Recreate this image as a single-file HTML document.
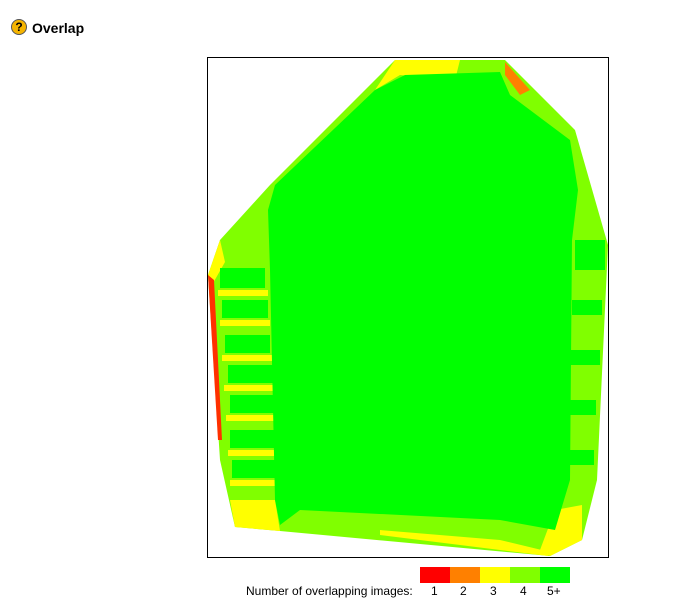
<!DOCTYPE html>
<html><head><style>
body{margin:0;background:#fff;width:689px;height:614px;position:relative;font-family:"Liberation Sans",sans-serif;}
.t{position:absolute;left:32px;top:20px;font-weight:bold;font-size:14px;color:#000;}
.ic{position:absolute;left:11px;top:19px;width:16px;height:16px;border-radius:50%;background:#f5b400;border:1px solid #555;box-sizing:border-box;font-size:12px;font-weight:bold;text-align:center;line-height:15px;}
.lb{position:absolute;top:584px;font-size:12px;color:#000;}
</style></head><body>
<div class="ic">?</div><div class="t">Overlap</div>
<svg style="position:absolute;left:0;top:0" width="689" height="614">
<rect x="207.5" y="57.5" width="401" height="500" fill="#fff" stroke="#000"/>
<polygon points="395,60 505,60 575,130 608,245 597,480 582,540 550,556 280,531 235,527 220,460 208,275 220,240 270,185" fill="#80ff00"/>
<polygon points="395,60 460,60 455,80 400,75 375,90" fill="#ffff00"/>
<polygon points="505,62 530,90 520,95 505,75" fill="#ff8000"/>
<polygon points="208,275 220,240 225,262 212,285" fill="#ffff00"/>
<polygon points="208,275 214,280 222,440 218,440" fill="#ff3000"/>
<polygon points="230,500 275,500 280,531 235,527" fill="#ffff00"/>
<polygon points="555,510 582,505 582,540 550,556 540,550" fill="#ffff00"/>
<polygon points="380,530 500,540 550,552 548,556 380,535" fill="#ffff00"/>
<g fill="#ffff00">
<rect x="218" y="290" width="50" height="6"/><rect x="220" y="320" width="50" height="6"/><rect x="222" y="355" width="50" height="6"/><rect x="224" y="385" width="50" height="6"/><rect x="226" y="415" width="50" height="6"/><rect x="228" y="450" width="50" height="6"/><rect x="230" y="480" width="50" height="6"/>
</g>
<g fill="#00ff00">
<rect x="220" y="268" width="45" height="20"/><rect x="222" y="300" width="46" height="18"/><rect x="225" y="335" width="45" height="18"/><rect x="228" y="365" width="45" height="18"/><rect x="230" y="395" width="45" height="18"/><rect x="230" y="430" width="45" height="18"/><rect x="232" y="460" width="45" height="18"/>
<rect x="575" y="240" width="30" height="30"/><rect x="572" y="300" width="30" height="15"/><rect x="570" y="350" width="30" height="15"/><rect x="568" y="400" width="28" height="15"/><rect x="566" y="450" width="28" height="15"/>
</g>
<polygon points="405,75 500,72 510,95 570,140 578,190 572,240 570,480 555,530 500,520 300,510 280,525 275,500 270,270 268,210 275,185 375,90" fill="#00ff00"/>
<rect x="420" y="567" width="30" height="16" fill="#ff0000"/>
<rect x="450" y="567" width="30" height="16" fill="#ff8000"/>
<rect x="480" y="567" width="30" height="16" fill="#ffff00"/>
<rect x="510" y="567" width="30" height="16" fill="#80ff00"/>
<rect x="540" y="567" width="30" height="16" fill="#00ff00"/>
</svg>
<div class="lb" style="left:246px">Number of overlapping images:</div>
<div class="lb" style="left:431px">1</div>
<div class="lb" style="left:460px">2</div>
<div class="lb" style="left:490px">3</div>
<div class="lb" style="left:520px">4</div>
<div class="lb" style="left:547px">5+</div>
</body></html>
